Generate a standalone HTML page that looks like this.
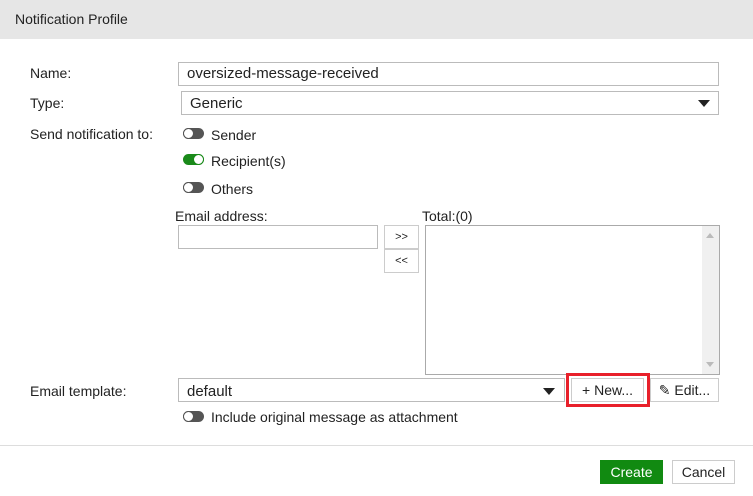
<!DOCTYPE html>
<html><head><style>
*{box-sizing:border-box;margin:0;padding:0}
body{width:753px;height:496px;background:#fff;font-family:"Liberation Sans",sans-serif;font-size:14px;color:#222;position:relative;overflow:hidden}
.a{position:absolute}
.hdr{left:0;top:0;width:753px;height:39px;background:#e6e6e6}
.box{border:1px solid #bbb;background:#fff}
.lbl{white-space:nowrap}
.tg{width:21px;height:11px;border-radius:6px;background:#555}
.tg::after{content:"";position:absolute;left:0;top:0;width:11px;height:11px;border-radius:50%;background:#fff;border:1px solid #555;box-sizing:border-box}
.tg.on{background:#1a8a1a}
.tg.on::after{left:10px;border-color:#1a8a1a}
.btn{border:1px solid #ccc;background:#fff;text-align:center;font-size:13px}
.tri{width:0;height:0;border-left:6px solid transparent;border-right:6px solid transparent;border-top:7px solid #222}
</style></head><body>
<div class="a hdr"></div>
<div class="a lbl" style="left:15px;top:11px;font-size:14px">Notification Profile</div>

<div class="a lbl" style="left:30px;top:65px">Name:</div>
<div class="a box" style="left:178px;top:62px;width:541px;height:24px"></div>
<div class="a lbl" style="left:187px;top:65px;font-size:15px">oversized-message-received</div>

<div class="a lbl" style="left:30px;top:95px">Type:</div>
<div class="a box" style="left:181px;top:91px;width:538px;height:24px"></div>
<div class="a lbl" style="left:190px;top:95px;font-size:15px">Generic</div>
<div class="a tri" style="left:698px;top:100px"></div>

<div class="a lbl" style="left:30px;top:126px">Send notification to:</div>
<div class="a tg" style="left:183px;top:128px"></div>
<div class="a lbl" style="left:211px;top:127px">Sender</div>
<div class="a tg on" style="left:183px;top:154px"></div>
<div class="a lbl" style="left:211px;top:153px">Recipient(s)</div>
<div class="a tg" style="left:183px;top:182px"></div>
<div class="a lbl" style="left:211px;top:181px">Others</div>

<div class="a lbl" style="left:175px;top:208px">Email address:</div>
<div class="a box" style="left:178px;top:225px;width:200px;height:24px"></div>
<div class="a btn" style="left:384px;top:225px;width:35px;height:24px;line-height:22px;font-size:11px">&gt;&gt;</div>
<div class="a btn" style="left:384px;top:249px;width:35px;height:24px;line-height:22px;font-size:11px">&lt;&lt;</div>
<div class="a lbl" style="left:422px;top:208px">Total:(0)</div>
<div class="a box" style="left:425px;top:225px;width:295px;height:150px;border-color:#aaa"></div>
<div class="a" style="left:702px;top:226px;width:17px;height:148px;background:#f0f0f0"></div>
<div class="a" style="left:706px;top:233px;border-left:4px solid transparent;border-right:4px solid transparent;border-bottom:5px solid #bbb"></div>
<div class="a" style="left:706px;top:362px;border-left:4px solid transparent;border-right:4px solid transparent;border-top:5px solid #bbb"></div>

<div class="a lbl" style="left:30px;top:383px">Email template:</div>
<div class="a box" style="left:178px;top:378px;width:387px;height:24px"></div>
<div class="a lbl" style="left:187px;top:383px;font-size:15px">default</div>
<div class="a tri" style="left:543px;top:388px"></div>
<div class="a" style="left:566px;top:373px;width:84px;height:34px;border:3px solid #e8202a"></div>
<div class="a btn" style="left:571px;top:378px;width:73px;height:24px;line-height:22px;font-size:14px">+ New...</div>
<div class="a btn" style="left:650px;top:378px;width:69px;height:24px;line-height:22px;font-size:14px">✎ Edit...</div>

<div class="a tg" style="left:183px;top:411px"></div>
<div class="a lbl" style="left:211px;top:409px">Include original message as attachment</div>

<div class="a" style="left:0;top:445px;width:753px;height:1px;background:#ddd"></div>
<div class="a" style="left:600px;top:460px;width:63px;height:24px;background:#118a11;color:#fff;text-align:center;line-height:24px">Create</div>
<div class="a btn" style="left:672px;top:460px;width:63px;height:24px;line-height:22px;font-size:14px">Cancel</div>
</body></html>
